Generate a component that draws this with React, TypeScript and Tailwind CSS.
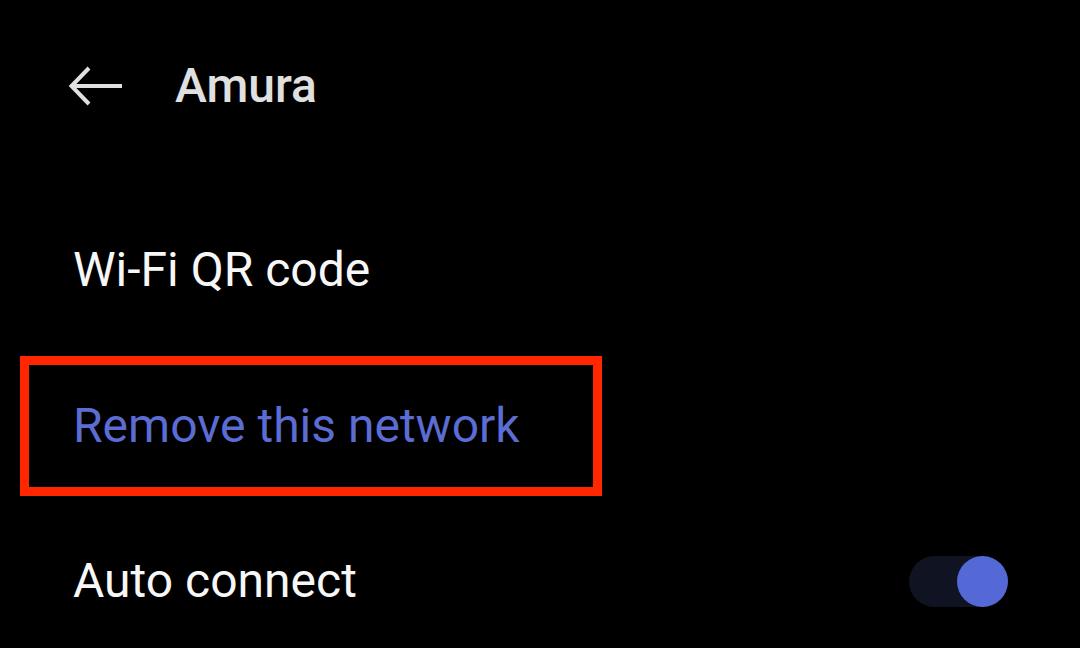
export default function App() {
  return (
    <div
      className="flex h-[648px] w-[1080px] flex-col overflow-hidden bg-black"
      style={{ fontFamily: "Roboto, 'Noto Sans', sans-serif" }}
    >
      {/* Header */}
      <div className="flex h-[172px] items-center">
        <svg className="ml-[68px] h-[42px] w-[56px]" viewBox="0 0 56 42" fill="none" stroke="#e0e0e0" strokeWidth={4}>
          <path d="M4 21H54" />
          <path d="M21 3L3.5 21L21 39" strokeLinejoin="miter" />
        </svg>
        <span className="ml-[51px] text-[48px] leading-[48px] font-medium text-[#e0e0e0]">Amura</span>
      </div>

      {/* Wi-Fi QR code */}
      <div className="mt-[48px] flex h-[100px] items-center pl-[73px]">
        <span className="text-[48px] leading-[48px] text-[#f7f7f7]">Wi-Fi QR code</span>
      </div>

      {/* Remove this network (highlighted) */}
      <div className="ml-[20px] mt-[36px] flex h-[140px] w-[582px] items-center border-[9px] border-[#ff2600] pl-[44px]">
        <span className="text-[48px] leading-[48px] text-[#5b6cd3]">Remove this network</span>
      </div>

      {/* Auto connect */}
      <div className="mt-[35px] flex h-[100px] items-center justify-between pl-[73px] pr-[72px]">
        <span className="text-[48px] leading-[48px] text-[#f7f7f7]">Auto connect</span>
        <div className="flex h-[51px] w-[99px] items-center justify-end rounded-full bg-[#0f1322]">
          <div className="h-[51px] w-[51px] rounded-full bg-[#5468d6]" />
        </div>
      </div>
    </div>
  );
}
